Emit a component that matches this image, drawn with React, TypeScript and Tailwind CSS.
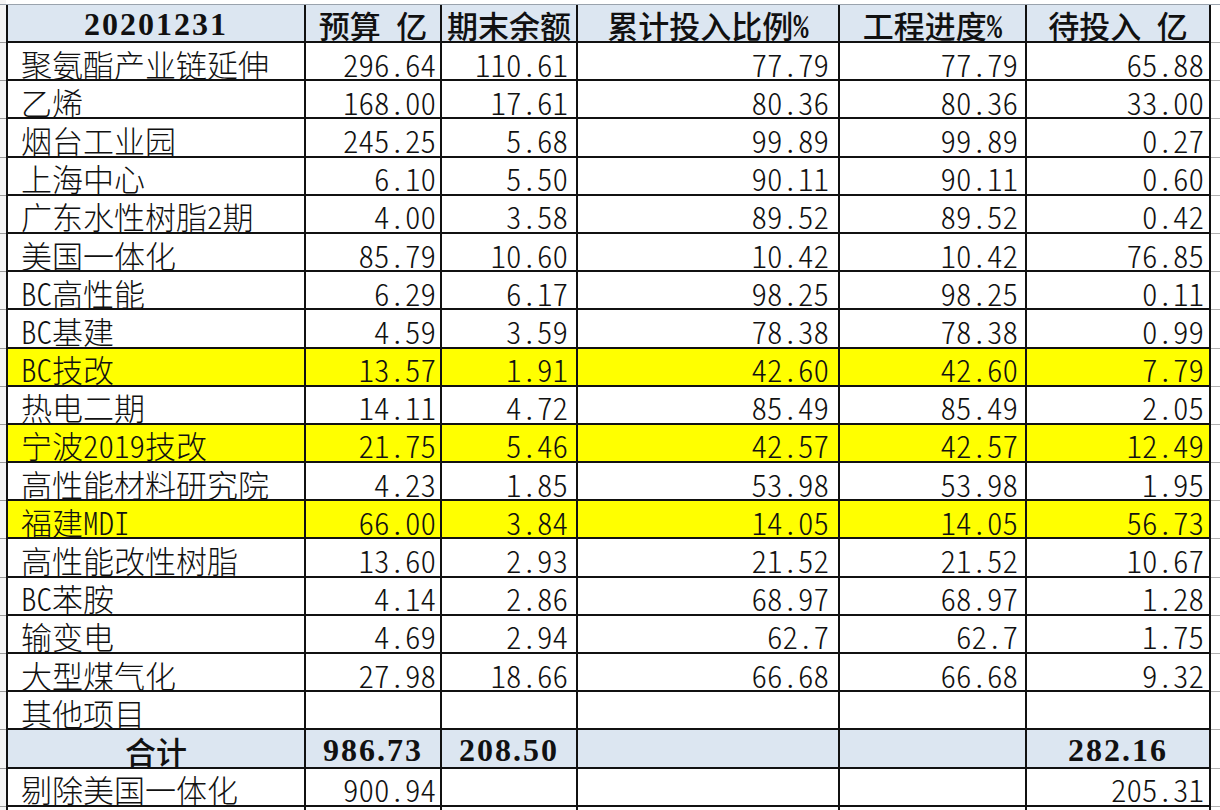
import React from "react";

type Row = { name: string; v: string[]; y?: boolean };

const rows: Row[] = [
  { name: "聚氨酯产业链延伸", v: ["296.64", "110.61", "77.79", "77.79", "65.88"] },
  { name: "乙烯", v: ["168.00", "17.61", "80.36", "80.36", "33.00"] },
  { name: "烟台工业园", v: ["245.25", "5.68", "99.89", "99.89", "0.27"] },
  { name: "上海中心", v: ["6.10", "5.50", "90.11", "90.11", "0.60"] },
  { name: "广东水性树脂2期", v: ["4.00", "3.58", "89.52", "89.52", "0.42"] },
  { name: "美国一体化", v: ["85.79", "10.60", "10.42", "10.42", "76.85"] },
  { name: "BC高性能", v: ["6.29", "6.17", "98.25", "98.25", "0.11"] },
  { name: "BC基建", v: ["4.59", "3.59", "78.38", "78.38", "0.99"] },
  { name: "BC技改", v: ["13.57", "1.91", "42.60", "42.60", "7.79"], y: true },
  { name: "热电二期", v: ["14.11", "4.72", "85.49", "85.49", "2.05"] },
  { name: "宁波2019技改", v: ["21.75", "5.46", "42.57", "42.57", "12.49"], y: true },
  { name: "高性能材料研究院", v: ["4.23", "1.85", "53.98", "53.98", "1.95"] },
  { name: "福建MDI", v: ["66.00", "3.84", "14.05", "14.05", "56.73"], y: true },
  { name: "高性能改性树脂", v: ["13.60", "2.93", "21.52", "21.52", "10.67"] },
  { name: "BC苯胺", v: ["4.14", "2.86", "68.97", "68.97", "1.28"] },
  { name: "输变电", v: ["4.69", "2.94", "62.7", "62.7", "1.75"] },
  { name: "大型煤气化", v: ["27.98", "18.66", "66.68", "66.68", "9.32"] },
  { name: "其他项目", v: ["", "", "", "", ""] },
];

const colW = ["w-[298px]", "w-[136px]", "w-[136px]", "w-[262px]", "w-[187px]", "w-[184px]"];
const colPr = ["", "pr-[4px]", "pr-[8px]", "pr-[9px]", "pr-[7px]", "pr-[5px]"];

const cjk =
  "font-['Noto_Sans_CJK_SC',sans-serif] [font-feature-settings:'hwid'] text-[31px] leading-[31px] text-[#111]";
const light = "[font-weight:300]";
const serifBold =
  "font-['Liberation_Serif',serif] font-bold text-[32px] leading-[32px] text-[#111] tracking-[2px]";

function Gutters({ children, h }: { children: React.ReactNode; h: string }) {
  return (
    <div className={`flex ${h}`}>
      <div className="w-[6px] shrink-0 border-b border-[#9a9a9a] bg-[#f4f4f4]" />
      <div className="flex border-l-2 border-[#111]">{children}</div>
      <div className="w-[9px] shrink-0 border-b border-[#b0b0b0]" />
    </div>
  );
}

export default function App() {
  return (
    <div className="w-[1220px] h-[810px] overflow-hidden bg-white">
      <div className="h-[4px] flex">
        <div className="w-[6px] bg-[#f4f4f4]" />
      </div>
      <div className="border-t border-[#9aa3ad]">
        <Gutters h="h-[38px]">
          {[
            { t: "20201231", serif: true },
            { t: "预算 亿" },
            { t: "期末余额" },
            { t: "累计投入比例%" },
            { t: "工程进度%" },
            { t: "待投入 亿" },
          ].map((c, i) => (
            <div
              key={i}
              className={`${colW[i]} h-full bg-[#dce6f1] border-r-2 border-b-2 border-[#111] flex items-center justify-center pt-[2px] whitespace-pre ${
                c.serif ? serifBold : cjk + " font-medium"
              }`}
            >
              {c.t}
            </div>
          ))}
        </Gutters>
      </div>
      {rows.map((r, ri) => (
        <Gutters key={ri} h="h-[38.2px]">
          <div
            className={`${colW[0]} h-full border-r-2 border-b-2 border-[#111] flex items-center pl-[13px] pt-[4px] whitespace-pre ${cjk} ${light} ${
              r.y ? "bg-[#ffff00]" : "bg-white"
            }`}
          >
            {r.name}
          </div>
          {r.v.map((v, i) => (
            <div
              key={i}
              className={`${colW[i + 1]} ${colPr[i + 1]} h-full border-r-2 border-b-2 border-[#111] flex items-center justify-end pt-[4px] ${cjk} ${light} ${
                r.y ? "bg-[#ffff00]" : "bg-white"
              }`}
            >
              {v}
            </div>
          ))}
        </Gutters>
      ))}
      <Gutters h="h-[38.2px]">
        <div
          className={`${colW[0]} h-full bg-[#dce6f1] border-r-2 border-b-2 border-[#111] flex items-center justify-center pt-[4px] ${cjk} font-medium`}
        >
          合计
        </div>
        {["986.73", "208.50", "", "", "282.16"].map((v, i) => (
          <div
            key={i}
            className={`${colW[i + 1]} h-full bg-[#dce6f1] border-r-2 border-b-2 border-[#111] flex items-center justify-center pt-[3px] ${serifBold}`}
          >
            {v}
          </div>
        ))}
      </Gutters>
      <Gutters h="h-[38.2px]">
        <div
          className={`${colW[0]} h-full bg-white border-r-2 border-b-2 border-[#111] flex items-center pl-[13px] pt-[4px] ${cjk} ${light}`}
        >
          剔除美国一体化
        </div>
        {["900.94", "", "", "", "205.31"].map((v, i) => (
          <div
            key={i}
            className={`${colW[i + 1]} ${colPr[i + 1]} h-full bg-white border-r-2 border-b-2 border-[#111] flex items-center justify-end pt-[4px] ${cjk} ${light}`}
          >
            {v}
          </div>
        ))}
      </Gutters>
      <Gutters h="h-[20px]">
        {colW.map((w, i) => (
          <div key={i} className={`${w} h-full bg-white border-r-2 border-[#111]`} />
        ))}
      </Gutters>
    </div>
  );
}
